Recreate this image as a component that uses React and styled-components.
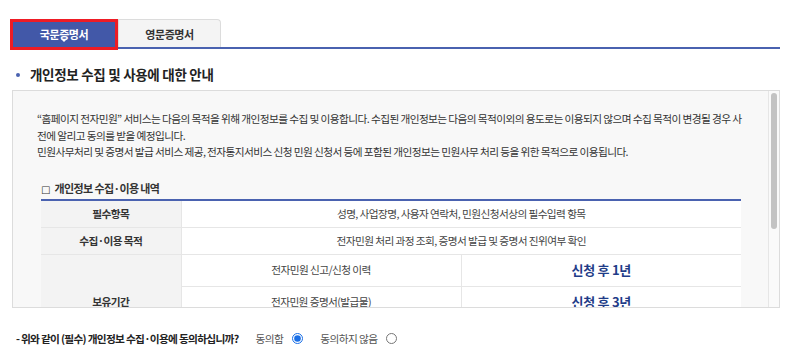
import React, { useState, useRef, useLayoutEffect } from 'react';
import styled, { createGlobalStyle } from 'styled-components';

const GlobalStyle = createGlobalStyle`
  body {
    margin: 0;
    background: #fff;
    font-family: "Noto Sans CJK KR", "Noto Sans", sans-serif;
    color: #333;
  }
`;

const retention = [
  { item: '전자민원 신고/신청 이력', period: '신청 후 1년' },
  { item: '전자민원 증명서(발급물)', period: '신청 후 3년' },
  { item: '전자민원 처리 결과', period: '신청 후 5년' },
];

const App = () => {
  const [tab, setTab] = useState('ko');
  const [agree, setAgree] = useState('yes');
  const [thumb, setThumb] = useState({ top: 0, height: 0 });
  const viewRef = useRef(null);

  // custom scrollbar: thumb size / offset follow the viewport
  const updateThumb = () => {
    const el = viewRef.current;
    if (!el) return;
    const track = el.clientHeight - 4;
    const height = Math.max(20, (track * el.clientHeight) / el.scrollHeight);
    const range = Math.max(1, el.scrollHeight - el.clientHeight);
    setThumb({ top: ((track - height) * el.scrollTop) / range, height });
  };

  useLayoutEffect(updateThumb, []);

  return (
    <Page>
      <GlobalStyle />
      <TabBar>
        <Tab active={tab === 'ko'} onClick={() => setTab('ko')}>국문증명서</Tab>
        <Tab active={tab === 'en'} onClick={() => setTab('en')}>영문증명서</Tab>
      </TabBar>

      <Heading>개인정보 수집 및 사용에 대한 안내</Heading>

      <ScrollBox>
        <Viewport ref={viewRef} onScroll={updateThumb}>
          <Intro>
            “홈페이지 전자민원” 서비스는 다음의 목적을 위해 개인정보를 수집 및 이용합니다. 수집된 개인정보는 다음의 목적이외의 용도로는 이용되지 않으며 수집 목적이 변경될 경우 사
            <br />
            전에 알리고 동의를 받을 예정입니다.
            <br />
            민원사무처리 및 증명서 발급 서비스 제공, 전자통지서비스 신청 민원 신청서 등에 포함된 개인정보는 민원사무 처리 등을 위한 목적으로 이용됩니다.
          </Intro>

          <SectionTitle><Box>□</Box>개인정보 수집·이용 내역</SectionTitle>
          <InfoTable>
            <colgroup>
              <col width="140" />
              <col width="280" />
              <col width="280" />
            </colgroup>
            <tbody>
              <tr>
                <Th>필수항목</Th>
                <Td colSpan={2}>성명, 사업장명, 사용자 연락처, 민원신청서상의 필수입력 항목</Td>
              </tr>
              <tr>
                <Th>수집·이용 목적</Th>
                <Td colSpan={2}>전자민원 처리 과정 조회, 증명서 발급 및 증명서 진위여부 확인</Td>
              </tr>
              {retention.map((r, i) => (
                <tr key={r.item}>
                  {i === 0 && <Th rowSpan={retention.length}>보유기간</Th>}
                  <Td tall>{r.item}</Td>
                  <Period tall>{r.period}</Period>
                </tr>
              ))}
            </tbody>
          </InfoTable>
          <Note>※ 위의 개인정보 수집·이용에 대한 동의를 거부할 권리가 있습니다. 그러나 동의를 거부할 경우 전자민원 서비스 이용이 제한됩니다.</Note>
        </Viewport>
        <ScrollTrack>
          <Thumb style={{ top: 2 + thumb.top, height: thumb.height }} />
        </ScrollTrack>
      </ScrollBox>

      <AgreeRow>
        <Question>- 위와 같이 (필수) 개인정보 수집·이용에 동의하십니까?</Question>
        <Choice>
          동의함
          <Radio type="radio" name="agree" checked={agree === 'yes'} onChange={() => setAgree('yes')} />
        </Choice>
        <Choice>
          동의하지 않음
          <Radio type="radio" name="agree" checked={agree === 'no'} onChange={() => setAgree('no')} />
        </Choice>
      </AgreeRow>
    </Page>
  );
};

export default App;

const Page = styled.div`
  padding: 19px 20px 0 10px;
  font-size: 10.7px;
  letter-spacing: -0.6px;
`;

const TabBar = styled.div`
  display: flex;
  align-items: flex-start;
  height: 28px;
  border-bottom: 2px solid #4a62b0;
`;

const Tab = styled.button`
  position: relative;
  box-sizing: border-box;
  font-family: inherit;
  font-size: 11px;
  font-weight: 700;
  letter-spacing: -0.4px;
  cursor: pointer;
  padding: 0;
  width: ${p => (p.active ? '108px' : '103px')};
  height: ${p => (p.active ? '31px' : '28px')};
  color: ${p => (p.active ? '#fff' : '#333')};
  background: ${p => (p.active ? '#4258a8' : '#f4f4f4')};
  border: ${p => (p.active ? '3px solid #ee1c25' : '1px solid #dcdcdc')};
  border-bottom: ${p => (p.active ? '3px solid #ee1c25' : 'none')};
  border-radius: ${p => (p.active ? '0' : '0 4px 0 0')};
  z-index: ${p => (p.active ? 1 : 0)};
  padding-bottom: ${p => (p.active ? '2px' : '0')};

  &::after {
    content: '';
    display: ${p => (p.active ? 'block' : 'none')};
    position: absolute;
    left: 50%;
    bottom: 5px;
    margin-left: -3px;
    border-left: 3px solid transparent;
    border-right: 3px solid transparent;
    border-top: 3px solid #fff;
  }
`;

const Heading = styled.h3`
  position: relative;
  margin: 15px 0 0;
  padding-left: 20px;
  font-size: 13.5px;
  line-height: 20px;
  font-weight: 700;
  color: #222;
  letter-spacing: -0.3px;

  &::before {
    content: '';
    position: absolute;
    left: 6px;
    top: 9px;
    width: 4px;
    height: 4px;
    border-radius: 50%;
    background: #4a62b0;
  }
`;

const ScrollBox = styled.div`
  display: flex;
  box-sizing: border-box;
  height: 218px;
  margin: 6px 0 0 2px;
  border: 1px solid #dcdcdc;
  background: #f8f8f8;
`;

const Viewport = styled.div`
  flex: 1;
  min-width: 0;
  padding: 20px 28px 48px 24px;
  overflow-y: auto;
  scrollbar-width: none;

  &::-webkit-scrollbar {
    display: none;
  }
`;

const ScrollTrack = styled.div`
  position: relative;
  flex: 0 0 10px;
  border-left: 1px solid #e6e6e6;
  background: #fafafa;
`;

const Thumb = styled.div`
  position: absolute;
  left: 2px;
  width: 6px;
  border-radius: 3px;
  background: #c3c3c3;
`;

const Intro = styled.p`
  margin: 0;
  line-height: 16.5px;
  color: #333;
  white-space: nowrap;
`;

const SectionTitle = styled.h4`
  margin: 19px 0 1px 4px;
  font-size: 11px;
  line-height: 16px;
  font-weight: 700;
  color: #333;
`;

const Box = styled.span`
  font-family: "DejaVu Sans", sans-serif;
  font-weight: 400;
  font-size: 10px;
  letter-spacing: 0;
  margin-right: 4px;
`;

const InfoTable = styled.table`
  width: 700px;
  margin-left: 4px;
  border-collapse: collapse;
  border-top: 2px solid #4a62b0;
  table-layout: fixed;
`;

const Th = styled.th`
  height: 26px;
  padding: 0;
  line-height: 12px;
  background: #f3f3f3;
  border-bottom: 1px solid #e6e6e6;
  font-weight: 700;
  color: #333;
  text-align: center;
`;

const Td = styled.td`
  height: ${p => (p.tall ? '31px' : '26px')};
  padding: 0;
  line-height: 12px;
  background: #fff;
  border-bottom: 1px solid #e6e6e6;
  border-left: 1px solid #e6e6e6;
  color: #444;
  text-align: center;
`;

const Period = styled(Td)`
  font-size: 13px;
  font-weight: 700;
  color: #1f3c88;
  letter-spacing: -0.3px;
`;

const Note = styled.p`
  margin: 12px 0 0 4px;
  line-height: 16px;
  color: #555;
`;

const AgreeRow = styled.div`
  display: flex;
  align-items: center;
  margin: 21px 0 0 6px;
  height: 18px;
`;

const Question = styled.span`
  font-weight: 700;
  color: #222;
  letter-spacing: -0.7px;
  margin-right: 17px;
`;

const Choice = styled.label`
  display: flex;
  align-items: center;
  gap: 9px;
  margin-right: 17px;
  color: #555;
`;

const Radio = styled.input`
  width: 11px;
  height: 11px;
  margin: 0;
  accent-color: #1a6fe6;
`;
